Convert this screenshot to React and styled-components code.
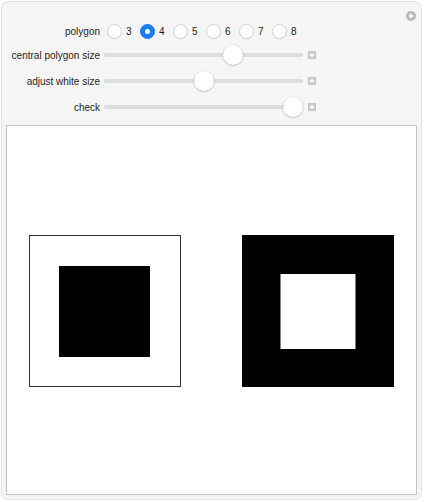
import React from 'react'
import styled, { createGlobalStyle } from 'styled-components'

const GlobalStyle = createGlobalStyle`
  body {
    margin: 0;
    background: #ffffff;
    font-family: "Liberation Sans", Arial, sans-serif;
  }
`

const Panel = styled.div`
  position: relative;
  margin: 1px 0 0 1px;
  width: 421px;
  height: 499px;
  box-sizing: border-box;
  background: #f5f5f5;
  border: 1px solid #e4e4e4;
  border-radius: 7px;
  padding-top: 18px;
`

const CornerButton = styled.div`
  position: absolute;
  top: 9px;
  right: 5px;
  width: 10px;
  height: 10px;
  border-radius: 50%;
  background: #b9b9b9;
  display: flex;
  align-items: center;
  justify-content: center;
`

const Controls = styled.div`
  display: flex;
  flex-direction: column;
`

const Row = styled.div`
  display: flex;
  align-items: center;
  height: ${({ h }) => h}px;
`

const Label = styled.div`
  width: 102px;
  text-align: right;
  font-size: 10px;
  color: #1e1e1e;
  white-space: nowrap;
  padding-right: 4px;
  box-sizing: border-box;
  flex-shrink: 0;
`

const RadioGroup = styled.div`
  display: flex;
  align-items: center;
  margin-left: 3px;
`

const RadioItem = styled.label`
  display: flex;
  align-items: center;
  width: 33px;
  font-size: 10px;
  color: #1e1e1e;
`

const RadioCircle = styled.span`
  width: 15px;
  height: 15px;
  box-sizing: border-box;
  border-radius: 50%;
  margin-right: 4px;
  display: flex;
  align-items: center;
  justify-content: center;
  background: ${({ on }) => (on ? '#1a7cf4' : '#ffffff')};
  border: 1px solid ${({ on }) => (on ? '#1a7cf4' : '#d4d4d4')};
  box-shadow: ${({ on }) => (on ? 'none' : '0 0.5px 1px rgba(0,0,0,0.08)')};

  &::after {
    content: '';
    display: ${({ on }) => (on ? 'block' : 'none')};
    width: 5px;
    height: 5px;
    border-radius: 50%;
    background: #fff;
  }
`

const Track = styled.div`
  position: relative;
  width: 199px;
  height: 4px;
  border-radius: 2px;
  background: #dddddd;
  flex-shrink: 0;
`

const Thumb = styled.div`
  position: absolute;
  top: 50%;
  width: 20px;
  height: 20px;
  margin-left: -10px;
  margin-top: -10px;
  border-radius: 50%;
  background: #ffffff;
  box-shadow: 0 0.5px 2px rgba(0, 0, 0, 0.3);
`

const PlusBox = styled.div`
  width: 8px;
  height: 8px;
  margin-left: 5px;
  background: #c6c6c6;
  display: flex;
  align-items: center;
  justify-content: center;
`

const Frame = styled.div`
  margin: 5px 0 0 4px;
  width: 411px;
  height: 370px;
  box-sizing: border-box;
  background: #ffffff;
  border: 1px solid #c4c4c4;
`

const Plus = ({ size, stroke }) => (
  <svg width={size} height={size} viewBox="0 0 10 10">
    <path d="M5 2v6M2 5h6" stroke="#fff" strokeWidth={stroke} />
  </svg>
)

const Slider = ({ label, value }) => (
  <Row h={26}>
    <Label>{label}</Label>
    <Track>
      <Thumb style={{ left: `${10 + value * 179}px` }} />
    </Track>
    <PlusBox>
      <Plus size={8} stroke={1.6} />
    </PlusBox>
  </Row>
)

const options = [3, 4, 5, 6, 7, 8]

export default function App() {
  const selected = 4
  return (
    <>
      <GlobalStyle />
      <Panel>
        <CornerButton>
          <Plus size={8} stroke={1.8} />
        </CornerButton>
        <Controls>
          <Row h={22}>
            <Label>polygon</Label>
            <RadioGroup>
              {options.map((n) => (
                <RadioItem key={n}>
                  <RadioCircle on={n === selected} />
                  {n}
                </RadioItem>
              ))}
            </RadioGroup>
          </Row>
          <Slider label="central polygon size" value={0.665} />
          <Slider label="adjust white size" value={0.5} />
          <Slider label="check" value={1} />
        </Controls>
        <Frame>
          <svg width="409" height="368" viewBox="0 0 409 368">
            <rect x="22.5" y="109.5" width="151" height="151" fill="#fff" stroke="#333" strokeWidth="1" />
            <rect x="52" y="140" width="91" height="91" fill="#000" />
            <rect x="235" y="109" width="152" height="152" fill="#000" />
            <rect x="273.5" y="148" width="75" height="75" fill="#fff" />
          </svg>
        </Frame>
      </Panel>
    </>
  )
}
